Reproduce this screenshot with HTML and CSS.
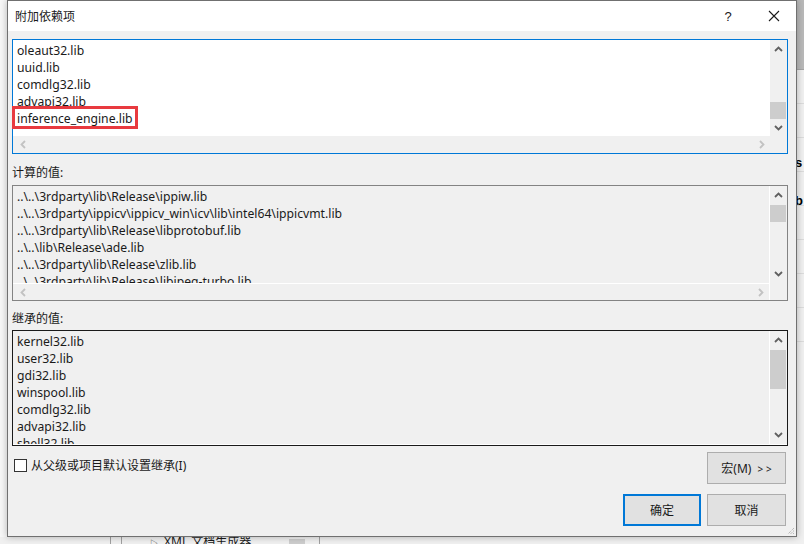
FILE: index.html
```html
<!DOCTYPE html>
<html lang="zh-CN">
<head>
<meta charset="utf-8">
<title>附加依赖项</title>
<link rel="stylesheet" href="styles.css">
</head>
<body>
<div class="desktop">
  <div class="bg-right">
    <div class="bg-right-top"></div>
    <div class="bg-row"></div>
    <div class="bg-row"></div>
    <div class="bg-row"></div>
    <div class="bg-row"></div>
    <div class="bg-row"></div>
    <div class="bg-row"></div>
    <div class="bg-row"></div>
    <div class="bg-row"></div>
    <span class="bg-letter s">s</span>
    <span class="bg-letter b">b</span>
  </div>
  <div class="bg-bottom">
    <div class="bg-vline l1"></div>
    <div class="bg-vline l2"></div>
    <div class="bg-tree"><span class="bg-tri">▷</span>XML 文档生成器</div>
    <div class="bg-thumb"></div>
    <div class="bg-vline l3"></div>
  </div>

  <div class="dialog">
    <div class="titlebar">
      <span class="title">附加依赖项</span>
      <span class="help">?</span>
      <span class="close">
        <svg width="12" height="12" viewBox="0 0 12 12"><path d="M1 1 L11 11 M11 1 L1 11" stroke="#1a1a1a" stroke-width="1.1" fill="none"/></svg>
      </span>
    </div>
    <div class="body">
      <div class="listbox edit">
        <div class="lb-main">
          <div class="lb-content white">
            <div class="line">oleaut32.lib</div>
            <div class="line">uuid.lib</div>
            <div class="line">comdlg32.lib</div>
            <div class="line">advapi32.lib</div>
            <div class="line">inference_engine.lib</div>
          </div>
          <div class="vscroll">
            <div class="arrow-btn"><svg width="9" height="6" viewBox="0 0 9 6"><path d="M1 5 L4.5 1.5 L8 5" class="chev"/></svg></div>
            <div class="track"><div class="thumb" style="margin-top:45px;height:17px"></div></div>
            <div class="arrow-btn"><svg width="9" height="6" viewBox="0 0 9 6"><path d="M1 1 L4.5 4.5 L8 1" class="chev"/></svg></div>
          </div>
        </div>
        <div class="hscroll">
          <svg width="6" height="9" viewBox="0 0 6 9"><path d="M5 1 L1.5 4.5 L5 8" class="chev dim"/></svg>
          <svg width="6" height="9" viewBox="0 0 6 9"><path d="M1 1 L4.5 4.5 L1 8" class="chev dim"/></svg>
        </div>
        <div class="highlight"></div>
      </div>

      <div class="label first">计算的值:</div>
      <div class="listbox readonly">
        <div class="lb-main">
          <div class="lb-content divided">
            <div class="line">..\..\3rdparty\lib\Release\ippiw.lib</div>
            <div class="line">..\..\3rdparty\ippicv\ippicv_win\icv\lib\intel64\ippicvmt.lib</div>
            <div class="line">..\..\3rdparty\lib\Release\libprotobuf.lib</div>
            <div class="line">..\..\lib\Release\ade.lib</div>
            <div class="line">..\..\3rdparty\lib\Release\zlib.lib</div>
            <div class="line">..\..\3rdparty\lib\Release\libjpeg-turbo.lib</div>
          </div>
          <div class="vscroll">
            <div class="arrow-btn"><svg width="9" height="6" viewBox="0 0 9 6"><path d="M1 5 L4.5 1.5 L8 5" class="chev"/></svg></div>
            <div class="track"><div class="thumb" style="margin-top:1px;height:17px"></div></div>
            <div class="arrow-btn"><svg width="9" height="6" viewBox="0 0 9 6"><path d="M1 1 L4.5 4.5 L8 1" class="chev"/></svg></div>
          </div>
        </div>
        <div class="hscroll divided-top">
          <svg width="6" height="9" viewBox="0 0 6 9"><path d="M5 1 L1.5 4.5 L5 8" class="chev dim"/></svg>
          <svg width="6" height="9" viewBox="0 0 6 9"><path d="M1 1 L4.5 4.5 L1 8" class="chev dim"/></svg>
        </div>
      </div>

      <div class="label second">继承的值:</div>
      <div class="listbox inherited">
        <div class="lb-main full">
          <div class="lb-content divided">
            <div class="line">kernel32.lib</div>
            <div class="line">user32.lib</div>
            <div class="line">gdi32.lib</div>
            <div class="line">winspool.lib</div>
            <div class="line">comdlg32.lib</div>
            <div class="line">advapi32.lib</div>
            <div class="line">shell32.lib</div>
          </div>
          <div class="vscroll">
            <div class="arrow-btn"><svg width="9" height="6" viewBox="0 0 9 6"><path d="M1 5 L4.5 1.5 L8 5" class="chev"/></svg></div>
            <div class="track"><div class="thumb" style="margin-top:1px;height:39px"></div></div>
            <div class="arrow-btn"><svg width="9" height="6" viewBox="0 0 9 6"><path d="M1 1 L4.5 4.5 L8 1" class="chev"/></svg></div>
          </div>
        </div>
      </div>

      <div class="option-row">
        <label class="check"><span class="box"></span><span>从父级或项目默认设置继承(I)</span></label>
        <button class="btn">宏(M) <span class="gt">&gt; &gt;</span></button>
      </div>
      <div class="action-row">
        <button class="btn primary">确定</button>
        <button class="btn">取消</button>
      </div>
    </div>
    <svg class="grip" width="8" height="8" viewBox="0 0 8 8">
      <path d="M7 1 L1 7 M7 3.5 L3.5 7 M7 6 L6 7" stroke="#a0a0a0" stroke-width="1" stroke-dasharray="1 1" fill="none"/>
    </svg>
  </div>
</div>
</body>
</html>
```
FILE: styles.css
```css
* { box-sizing: border-box; }
html, body { margin: 0; padding: 0; }
body {
  font-family: "Noto Sans", "Noto Sans CJK SC", sans-serif;
  font-size: 12px;
  color: #1a1a1a;
  background: #f7f7f7;
}
.desktop {
  position: relative;
  width: 804px;
  height: 544px;
  overflow: hidden;
  background: #f7f7f7;
}

/* background application behind the dialog */
.bg-right {
  position: absolute;
  left: 797px;
  top: 0;
  width: 7px;
  height: 544px;
  background: #f0f0f0;
  display: flex;
  flex-direction: column;
}
.bg-right-top { height: 70px; background: #b9b9b9; border-bottom: 1px solid #a5a5a5; }
.bg-row { height: 34px; border-bottom: 1px solid #dcdcdc; }
.bg-letter {
  position: absolute;
  left: -2px;
  font-weight: bold;
  font-size: 13px;
  line-height: 14px;
  color: #000;
  font-family: "Liberation Sans", sans-serif;
}
.bg-letter.s { top: 156px; }
.bg-letter.b { top: 194px; }
.bg-bottom {
  position: absolute;
  left: 0;
  top: 537px;
  width: 797px;
  height: 7px;
  background: #f0f0f0;
}
.bg-vline { position: absolute; top: 0; width: 1px; height: 7px; background: #a0a0a0; }
.bg-vline.l1 { left: 110px; }
.bg-vline.l2 { left: 121px; }
.bg-vline.l3 { left: 319px; }
.bg-tree {
  position: absolute;
  left: 150px;
  top: -2px;
  font-size: 12px;
  line-height: 14px;
  white-space: nowrap;
}
.bg-tri { font-size: 8px; margin-right: 6px; color: #444; }
.bg-thumb { position: absolute; left: 289px; top: 2px; width: 16px; height: 5px; background: #cdcdcd; }

/* dialog window */
.dialog {
  position: absolute;
  left: 7px;
  top: 0;
  width: 790px;
  height: 537px;
  border: 1px solid #707070;
  background: #f0f0f0;
  box-shadow: 0 0 7px rgba(0, 0, 0, 0.28);
}
.titlebar {
  height: 30px;
  background: #fff;
  display: flex;
  align-items: center;
  padding-left: 7px;
}
.title { flex: 1; font-size: 12px; color: #1a1a1a; }
.help { font-size: 13px; width: 46px; text-align: center; font-family: "Liberation Sans", sans-serif; }
.close { width: 45px; display: flex; justify-content: center; align-items: center; }

.body {
  padding: 8px 8px 0 4px;
  display: flex;
  flex-direction: column;
}

.listbox {
  position: relative;
  width: 776px;
  height: 116px;
  border: 1px solid #838383;
  display: flex;
  flex-direction: column;
}
.listbox.edit { border-color: #0078d7; height: 115px; }
.listbox.inherited { border-color: #1a1a1a; }
.lb-main { display: flex; height: 96px; }
.listbox.readonly .lb-main { height: 97px; }
.lb-main.full { height: 114px; border-bottom: 1px solid #fff; }
.lb-content {
  flex: 1;
  padding: 2px 4px 0;
  overflow: hidden;
  white-space: nowrap;
  font-size: 12.2px;
}
.lb-content.white { background: #fff; }
.lb-content.divided { border-right: 1px solid #fff; }
.line { height: 17px; line-height: 17px; }

.vscroll {
  width: 17px;
  display: flex;
  flex-direction: column;
  background: #f0f0f0;
  padding-right: 1px;
}
.arrow-btn { height: 18px; display: flex; align-items: center; justify-content: center; }
.track { flex: 1; }
.thumb { background: #cdcdcd; width: 16px; }
.chev { stroke: #606060; stroke-width: 1.8; fill: none; }
.chev.dim { stroke: #c2c2c2; }

.hscroll {
  height: 17px;
  width: 757px;
  display: flex;
  align-items: center;
  justify-content: space-between;
  padding: 0 5px 0 7px;
  background: #f0f0f0;
}
.hscroll.divided-top { border-top: 1px solid #fff; border-right: 1px solid #fff; }

.highlight {
  position: absolute;
  left: -1px;
  top: 66px;
  width: 126px;
  height: 23px;
  border: 3px solid #e83a3f;
}

.label { height: 17px; line-height: 17px; }
.label.first { margin: 10px 0 4px; }
.label.second { margin: 9px 0 3px; }

.option-row {
  margin-top: 6px;
  display: flex;
  justify-content: space-between;
  align-items: flex-start;
  padding-right: 2px;
}
.check { display: flex; align-items: center; margin-top: 4px; margin-left: 2px; gap: 4px; }
.box { width: 13px; height: 13px; border: 1px solid #333; background: #fff; }

.btn {
  font-family: "Noto Sans", "Noto Sans CJK SC", sans-serif;
  font-size: 12px;
  color: #1a1a1a;
  width: 79px;
  height: 32px;
  background: #e1e1e1;
  border: 1px solid #adadad;
  padding: 0;
  margin: 0;
}
.btn .gt { font-size: 10px; margin-left: 3px; }
.btn.primary { width: 78px; border: 2px solid #0078d7; }
.action-row {
  margin-top: 10px;
  display: flex;
  justify-content: flex-end;
  gap: 6px;
  padding-right: 2px;
}
.grip { position: absolute; right: 1px; bottom: 1px; }
```
